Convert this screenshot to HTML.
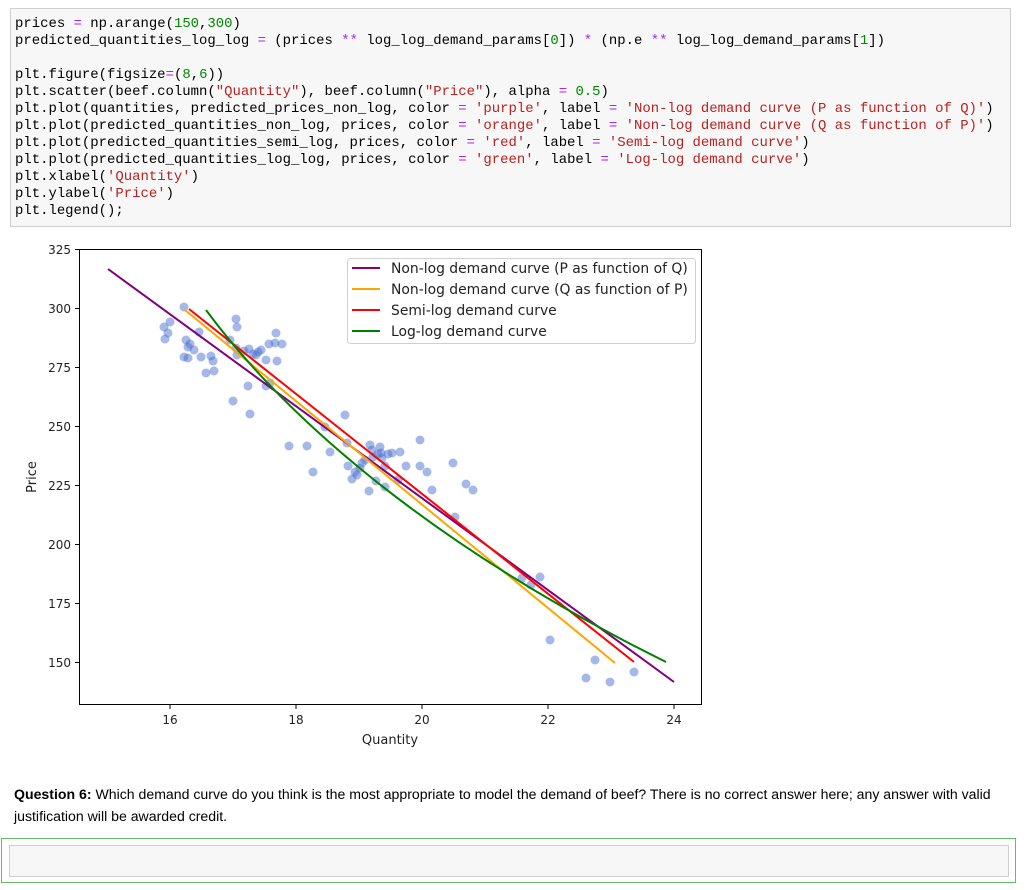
<!DOCTYPE html>
<html><head><meta charset="utf-8"><style>
body{margin:0;width:1028px;height:890px;background:#fff;position:relative;overflow:hidden;font-family:"Liberation Sans",sans-serif}
.code{position:absolute;left:10px;top:8px;width:999px;height:217px;background:#f7f7f7;border:1px solid #cfcfcf}
pre{margin:0;position:absolute;left:4px;top:7px;font-family:"Liberation Mono",monospace;font-size:13.95px;line-height:17px;color:#000}
.o{color:#aa22ff}.n{color:#008800}.s{color:#ba2121}
.q{position:absolute;left:14px;top:783px;font-size:14.1px;line-height:22px;color:#000;width:990px}
.ans{position:absolute;left:1px;top:838px;width:1013px;height:43px;border:1px solid #66bb6a}
.inner{position:absolute;left:7px;top:6px;width:998px;height:30px;background:#f7f7f7;border:1px solid #cfcfcf}
</style></head><body>
<div class="code"><pre>prices <span class="o">=</span> np.arange(<span class="n">150</span>,<span class="n">300</span>)
predicted_quantities_log_log <span class="o">=</span> (prices <span class="o">**</span> log_log_demand_params[<span class="n">0</span>]) <span class="o">*</span> (np.e <span class="o">**</span> log_log_demand_params[<span class="n">1</span>])

plt.figure(figsize<span class="o">=</span>(<span class="n">8</span>,<span class="n">6</span>))
plt.scatter(beef.column(<span class="s">"Quantity"</span>), beef.column(<span class="s">"Price"</span>), alpha <span class="o">=</span> <span class="n">0.5</span>)
plt.plot(quantities, predicted_prices_non_log, color <span class="o">=</span> <span class="s">'purple'</span>, label <span class="o">=</span> <span class="s">'Non-log demand curve (P as function of Q)'</span>)
plt.plot(predicted_quantities_non_log, prices, color <span class="o">=</span> <span class="s">'orange'</span>, label <span class="o">=</span> <span class="s">'Non-log demand curve (Q as function of P)'</span>)
plt.plot(predicted_quantities_semi_log, prices, color <span class="o">=</span> <span class="s">'red'</span>, label <span class="o">=</span> <span class="s">'Semi-log demand curve'</span>)
plt.plot(predicted_quantities_log_log, prices, color <span class="o">=</span> <span class="s">'green'</span>, label <span class="o">=</span> <span class="s">'Log-log demand curve'</span>)
plt.xlabel(<span class="s">'Quantity'</span>)
plt.ylabel(<span class="s">'Price'</span>)
plt.legend();</pre></div>

<svg style="position:absolute;left:0;top:0" width="1028" height="780" font-family="DejaVu Sans, Liberation Sans, sans-serif" font-size="12">
<g fill="#4c72d0" fill-opacity="0.5">
<circle cx="184" cy="307" r="4.5"/><circle cx="164" cy="327" r="4.5"/><circle cx="170" cy="322" r="4.5"/><circle cx="168" cy="333" r="4.5"/><circle cx="165" cy="339" r="4.5"/><circle cx="186" cy="340" r="4.5"/><circle cx="190" cy="344" r="4.5"/><circle cx="188" cy="347" r="4.5"/><circle cx="194" cy="350" r="4.5"/><circle cx="184" cy="357" r="4.5"/><circle cx="188" cy="358" r="4.5"/><circle cx="201" cy="357" r="4.5"/><circle cx="211" cy="356" r="4.5"/><circle cx="213" cy="361" r="4.5"/><circle cx="206" cy="373" r="4.5"/><circle cx="214" cy="371" r="4.5"/><circle cx="199" cy="332" r="4.5"/><circle cx="230" cy="340" r="4.5"/><circle cx="236" cy="319" r="4.5"/><circle cx="237" cy="327" r="4.5"/><circle cx="236" cy="348" r="4.5"/><circle cx="237" cy="355" r="4.5"/><circle cx="244" cy="351" r="4.5"/><circle cx="249" cy="349" r="4.5"/><circle cx="253" cy="354" r="4.5"/><circle cx="256" cy="355" r="4.5"/><circle cx="258" cy="352" r="4.5"/><circle cx="261" cy="350" r="4.5"/><circle cx="266" cy="360" r="4.5"/><circle cx="269" cy="344" r="4.5"/><circle cx="275" cy="343" r="4.5"/><circle cx="282" cy="344" r="4.5"/><circle cx="276" cy="333" r="4.5"/><circle cx="277" cy="361" r="4.5"/><circle cx="248" cy="386" r="4.5"/><circle cx="233" cy="401" r="4.5"/><circle cx="250" cy="414" r="4.5"/><circle cx="266" cy="386" r="4.5"/><circle cx="270" cy="383" r="4.5"/><circle cx="289" cy="446" r="4.5"/><circle cx="307" cy="446" r="4.5"/><circle cx="313" cy="472" r="4.5"/><circle cx="325" cy="427" r="4.5"/><circle cx="330" cy="452" r="4.5"/><circle cx="345" cy="415" r="4.5"/><circle cx="347" cy="443" r="4.5"/><circle cx="348" cy="466" r="4.5"/><circle cx="352" cy="479" r="4.5"/><circle cx="355" cy="472" r="4.5"/><circle cx="357" cy="475" r="4.5"/><circle cx="360" cy="468" r="4.5"/><circle cx="362" cy="463" r="4.5"/><circle cx="365" cy="460" r="4.5"/><circle cx="370" cy="445" r="4.5"/><circle cx="372" cy="450" r="4.5"/><circle cx="373" cy="457" r="4.5"/><circle cx="378" cy="454" r="4.5"/><circle cx="380" cy="447" r="4.5"/><circle cx="381" cy="453" r="4.5"/><circle cx="382" cy="458" r="4.5"/><circle cx="385" cy="466" r="4.5"/><circle cx="388" cy="454" r="4.5"/><circle cx="392" cy="453" r="4.5"/><circle cx="400" cy="452" r="4.5"/><circle cx="406" cy="466" r="4.5"/><circle cx="420" cy="440" r="4.5"/><circle cx="420" cy="466" r="4.5"/><circle cx="427" cy="472" r="4.5"/><circle cx="432" cy="490" r="4.5"/><circle cx="453" cy="463" r="4.5"/><circle cx="455" cy="517" r="4.5"/><circle cx="466" cy="484" r="4.5"/><circle cx="473" cy="490" r="4.5"/><circle cx="369" cy="491" r="4.5"/><circle cx="376" cy="481" r="4.5"/><circle cx="385" cy="487" r="4.5"/><circle cx="398" cy="480" r="4.5"/><circle cx="522" cy="578" r="4.5"/><circle cx="531" cy="585" r="4.5"/><circle cx="540" cy="577" r="4.5"/><circle cx="550" cy="640" r="4.5"/><circle cx="586" cy="678" r="4.5"/><circle cx="595" cy="660" r="4.5"/><circle cx="610" cy="682" r="4.5"/><circle cx="634" cy="672" r="4.5"/>
</g>
<g fill="none" stroke-width="2">
<line x1="108" y1="269" x2="674" y2="682" stroke="#800080"/>
<line x1="185" y1="310" x2="615" y2="663" stroke="#ffa500"/>
<line x1="189" y1="309" x2="634" y2="662" stroke="#ff0000"/>
<path d="M206 310 C280 410 420 540 666 662" stroke="#008000"/>
</g>
<rect x="79.5" y="249.5" width="622" height="455" fill="none" stroke="#000" stroke-width="1"/>
<g stroke="#000">
<line x1="170" y1="705" x2="170" y2="709"/><line x1="296" y1="705" x2="296" y2="709"/><line x1="422" y1="705" x2="422" y2="709"/><line x1="548" y1="705" x2="548" y2="709"/><line x1="674" y1="705" x2="674" y2="709"/>
<line x1="75" y1="249.5" x2="79" y2="249.5"/><line x1="75" y1="308.5" x2="79" y2="308.5"/><line x1="75" y1="367.5" x2="79" y2="367.5"/><line x1="75" y1="426.5" x2="79" y2="426.5"/><line x1="75" y1="485.5" x2="79" y2="485.5"/><line x1="75" y1="544.5" x2="79" y2="544.5"/><line x1="75" y1="603.5" x2="79" y2="603.5"/><line x1="75" y1="662.5" x2="79" y2="662.5"/>
</g>
<g text-anchor="middle" fill="#222">
<text x="170" y="724">16</text><text x="296" y="724">18</text><text x="422" y="724">20</text><text x="548" y="724">22</text><text x="674" y="724">24</text>
<text x="390" y="744" font-size="13">Quantity</text>
</g>
<g text-anchor="end" fill="#222">
<text x="71" y="254">325</text><text x="71" y="313">300</text><text x="71" y="372">275</text><text x="71" y="431">250</text><text x="71" y="490">225</text><text x="71" y="549">200</text><text x="71" y="608">175</text><text x="71" y="667">150</text>
</g>
<text transform="translate(36,477) rotate(-90)" text-anchor="middle" font-size="13" fill="#222">Price</text>
<rect x="347.5" y="258.5" width="348" height="85" rx="3" fill="#fff" fill-opacity="0.85" stroke="#d0d0d0"/>
<g stroke-width="2"><line x1="352" y1="268" x2="380" y2="268" stroke="#800080"/><line x1="352" y1="289" x2="380" y2="289" stroke="#ffa500"/><line x1="352" y1="310" x2="380" y2="310" stroke="#ff0000"/><line x1="352" y1="331" x2="380" y2="331" stroke="#008000"/></g>
<g font-size="13.9" fill="#222"><text x="391" y="273">Non-log demand curve (P as function of Q)</text><text x="391" y="294">Non-log demand curve (Q as function of P)</text><text x="391" y="315">Semi-log demand curve</text><text x="391" y="336">Log-log demand curve</text></g>
</svg>
<div class="q"><b>Question 6:</b> Which demand curve do you think is the most appropriate to model the demand of beef? There is no correct answer here; any answer with valid justification will be awarded credit.</div>
<div class="ans"><div class="inner"></div></div>
</body></html>
